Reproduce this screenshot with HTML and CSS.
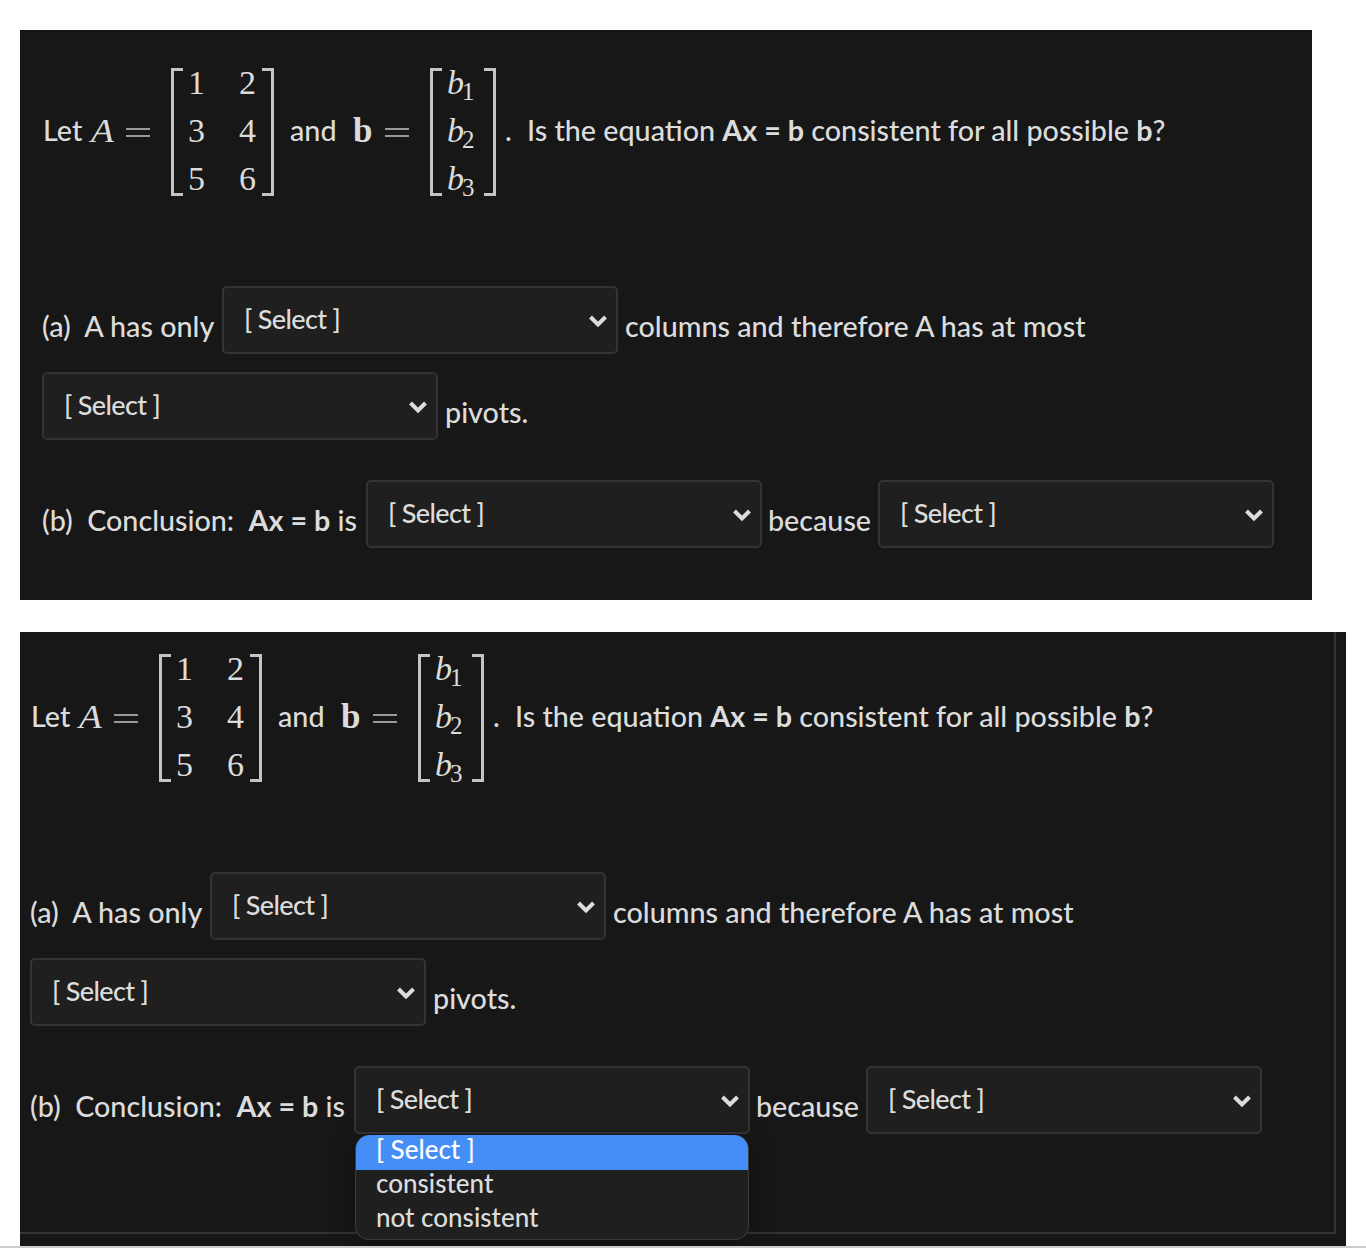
FILE: index.html
```
<!DOCTYPE html>
<html lang="en">
<head>
  <meta charset="UTF-8" />
  <meta name="viewport" content="width=device-width, initial-scale=1.0"/>
  <title>Linear Algebra Quiz</title>
  <link rel="stylesheet" href="styles.css">
</head>
<body>
  <div class="panel panel-first">
    <div class="question">
      <div class="formula">
        <span class="let">Let</span>
        <span class="math"><i class="var-a">A</i></span>
        <span class="equals"></span>
        <div class="matrix matrix-a">
          <span>1</span><span>2</span>
          <span>3</span><span>4</span>
          <span>5</span><span>6</span>
        </div>
        <span class="and">and</span>
        <span class="math"><b class="var-b">b</b></span>
        <span class="equals"></span>
        <div class="matrix matrix-b">
          <span><i>b</i><sub>1</sub></span>
          <span><i>b</i><sub>2</sub></span>
          <span><i>b</i><sub>3</sub></span>
        </div>
        <span class="dot">.</span>
        <span class="ask">Is the equation <b>Ax = b</b> consistent for all possible <b>b</b>?</span>
      </div>

      <div class="row">
        <span class="label label-a">(a)&nbsp; A has only</span>
        <div class="select-box">
          <select><option>[ Select ]</option></select>
          <svg class="arrow" viewBox="0 0 20 14"><path d="M2.5 3 L10 10.5 L17.5 3"/></svg>
        </div>
        <span class="after">columns and therefore A has at most</span>
      </div>

      <div class="row row-pivots">
        <div class="select-box">
          <select><option>[ Select ]</option></select>
          <svg class="arrow" viewBox="0 0 20 14"><path d="M2.5 3 L10 10.5 L17.5 3"/></svg>
        </div>
        <span class="after">pivots.</span>
      </div>

      <div class="row row-b">
        <span class="label label-b">(b)&nbsp; Conclusion:&nbsp; <b>Ax = b</b> is</span>
        <div class="select-box">
          <select><option>[ Select ]</option></select>
          <svg class="arrow" viewBox="0 0 20 14"><path d="M2.5 3 L10 10.5 L17.5 3"/></svg>
        </div>
        <span class="after because">because</span>
        <div class="select-box">
          <select><option>[ Select ]</option></select>
          <svg class="arrow" viewBox="0 0 20 14"><path d="M2.5 3 L10 10.5 L17.5 3"/></svg>
        </div>
      </div>
    </div>
  </div>

  <div class="panel panel-second">
    <div class="question">
      <div class="formula">
        <span class="let">Let</span>
        <span class="math"><i class="var-a">A</i></span>
        <span class="equals"></span>
        <div class="matrix matrix-a">
          <span>1</span><span>2</span>
          <span>3</span><span>4</span>
          <span>5</span><span>6</span>
        </div>
        <span class="and">and</span>
        <span class="math"><b class="var-b">b</b></span>
        <span class="equals"></span>
        <div class="matrix matrix-b">
          <span><i>b</i><sub>1</sub></span>
          <span><i>b</i><sub>2</sub></span>
          <span><i>b</i><sub>3</sub></span>
        </div>
        <span class="dot">.</span>
        <span class="ask">Is the equation <b>Ax = b</b> consistent for all possible <b>b</b>?</span>
      </div>

      <div class="row">
        <span class="label label-a">(a)&nbsp; A has only</span>
        <div class="select-box">
          <select><option>[ Select ]</option></select>
          <svg class="arrow" viewBox="0 0 20 14"><path d="M2.5 3 L10 10.5 L17.5 3"/></svg>
        </div>
        <span class="after">columns and therefore A has at most</span>
      </div>

      <div class="row row-pivots">
        <div class="select-box">
          <select><option>[ Select ]</option></select>
          <svg class="arrow" viewBox="0 0 20 14"><path d="M2.5 3 L10 10.5 L17.5 3"/></svg>
        </div>
        <span class="after">pivots.</span>
      </div>

      <div class="row row-b">
        <span class="label label-b">(b)&nbsp; Conclusion:&nbsp; <b>Ax = b</b> is</span>
        <div class="select-box">
          <select><option>[ Select ]</option></select>
          <svg class="arrow" viewBox="0 0 20 14"><path d="M2.5 3 L10 10.5 L17.5 3"/></svg>
          <ul class="dropdown">
            <li class="active">[ Select ]</li>
            <li>consistent</li>
            <li>not consistent</li>
          </ul>
        </div>
        <span class="after because">because</span>
        <div class="select-box">
          <select><option>[ Select ]</option></select>
          <svg class="arrow" viewBox="0 0 20 14"><path d="M2.5 3 L10 10.5 L17.5 3"/></svg>
        </div>
      </div>
    </div>
  </div>
</body>
</html>
```
FILE: styles.css
```
* {
  box-sizing: border-box;
}

body {
  margin: 0;
  height: 1248px;
  padding: 30px 20px 0;
  background: #fff;
  border-bottom: 2px solid #ccc;
  font-family: Lato, sans-serif;
  font-size: 28.7px;
  font-weight: 500;
  line-height: 34px;
  color: #dcdcdc;
  overflow: hidden;
}

.panel {
  background: #171717;
}

.panel-first {
  width: 1292px;
  height: 570px;
  padding: 38px 0 0 22px;
}

.panel-second {
  width: 1326px;
  height: 614px;
  margin-top: 32px;
}

.panel-second .question {
  width: 1316px;
  height: 602px;
  padding: 22px 0 0 10px;
  border-right: 2px solid #333;
  border-bottom: 2px solid #333;
}

.formula {
  display: grid;
  grid-template-columns: 49px 35px 45px 103px 79px 32px 45px 66px 31px auto;
  grid-template-rows: 128px;
  align-items: center;
  height: 128px;
  margin-bottom: 90px;
  white-space: nowrap;
}

.let,
.and,
.dot,
.ask {
  padding-bottom: 5px;
}

.math,
.matrix {
  font-family: "Liberation Serif", serif;
  font-size: 34px;
  font-weight: 400;
}

.math {
  padding-bottom: 3px;
}

.var-a {
  display: inline-block;
  transform: scaleX(1.1);
  transform-origin: left;
}

.var-b {
  font-size: 35px;
  font-weight: 700;
}

.equals {
  width: 24px;
  height: 9px;
  border-top: 2px solid #999;
  border-bottom: 2px solid #999;
}

/* square brackets on both sides of the matrix */
.matrix {
  position: relative;
  display: grid;
  height: 128px;
  grid-auto-rows: 48px;
  align-content: center;
  line-height: 46px;
  border: solid #c4c4c4;
  border-width: 0 3px;
}

.matrix::before,
.matrix::after {
  content: "";
  position: absolute;
  top: 0;
  bottom: 0;
  width: 9px;
  border: solid #c4c4c4;
  border-width: 3px 0;
}

.matrix::before {
  left: 0;
}

.matrix::after {
  right: 0;
}

.matrix-a {
  grid-template-columns: 51px 17px;
  padding-left: 14px;
}

.matrix-b {
  padding-left: 14px;
}

.matrix sub {
  margin-left: -2px;
  font-size: 25px;
  line-height: 0;
  vertical-align: -6px;
}

.let {
  padding-left: 1px;
}

.and {
  padding-left: 16px;
}

.dot {
  padding-left: 9px;
}

.row {
  display: flex;
  height: 68px;
  white-space: nowrap;
}

.row-pivots {
  margin-top: 18px;
}

.row-b {
  margin-top: 40px;
}

.label,
.after {
  padding-top: 23px;
}

.label-a {
  width: 180px;
}

.label-b {
  width: 324px;
}

.after {
  padding-left: 7px;
}

.because {
  width: 116px;
  padding-left: 6px;
}

.select-box {
  position: relative;
  width: 396px;
}

select {
  appearance: none;
  width: 396px;
  height: 68px;
  padding: 0 20px 4px;
  background: #1f1f1f;
  border: 2px solid #333;
  border-radius: 5px;
  color: #dcdcdc;
  font-family: inherit;
  font-size: 27px;
  font-weight: 500;
  letter-spacing: -0.65px;
}

.arrow {
  position: absolute;
  top: 28px;
  right: 10px;
  width: 20px;
  height: 14px;
  fill: none;
  stroke: #dcdcdc;
  stroke-width: 4;
}

.dropdown {
  position: absolute;
  top: 69px;
  left: 1px;
  width: 394px;
  height: 105px;
  margin: 0;
  padding: 0;
  list-style: none;
  background: #1f1f1f;
  border: 1px solid #3a3a3a;
  border-top: none;
  border-radius: 14px;
  font-size: 26px;
  line-height: 28px;
  box-shadow: 0 6px 24px rgba(0,0,0,0.35);
}

.dropdown li {
  height: 34px;
  padding-left: 20px;
}

.dropdown .active {
  height: 35px;
  margin-bottom: -1px;
  background: #458ef7;
  border-radius: 14px 14px 0 0;
  color: #fff;
}
```
